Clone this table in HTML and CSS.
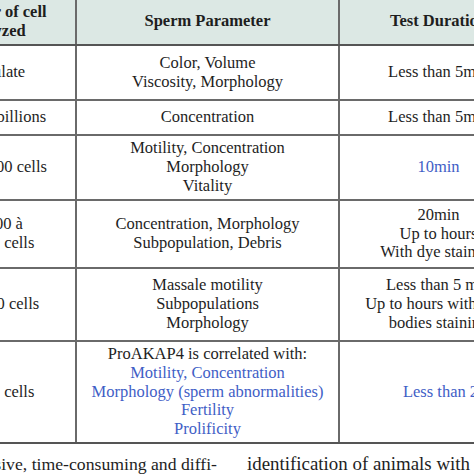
FILE: index.html
```html
<!DOCTYPE html>
<html>
<head>
<meta charset="utf-8">
<link rel="stylesheet" href="styles.css">
</head>
<body>
<div class="table">
  <div class="row head">
    <div class="cell"><span>Number of cell</span><span>analyzed</span></div>
    <div class="cell"><span>Sperm Parameter</span></div>
    <div class="cell"><span>Test Duration</span></div>
  </div>
  <div class="row r1">
    <div class="cell"><span>Ejaculate</span></div>
    <div class="cell"><span>Color, Volume</span><span>Viscosity, Morphology</span></div>
    <div class="cell"><span>Less than 5min</span></div>
  </div>
  <div class="row r2">
    <div class="cell"><span>Several billions</span></div>
    <div class="cell"><span>Concentration</span></div>
    <div class="cell"><span>Less than 5min</span></div>
  </div>
  <div class="row r3">
    <div class="cell"><span>100 to 200 cells</span></div>
    <div class="cell"><span>Motility, Concentration</span><span>Morphology</span><span>Vitality</span></div>
    <div class="cell"><span class="blue">10min</span></div>
  </div>
  <div class="row r4">
    <div class="cell"><span>10 000 à</span><span>50 000 cells</span></div>
    <div class="cell"><span>Concentration, Morphology</span><span>Subpopulation, Debris</span></div>
    <div class="cell"><span>20min</span><span>Up to hours</span><span>With dye staining</span></div>
  </div>
  <div class="row r5">
    <div class="cell"><span>100-200 cells</span></div>
    <div class="cell"><span>Massale motility</span><span>Subpopulations</span><span>Morphology</span></div>
    <div class="cell"><span>Less than 5 min</span><span>Up to hours with dead</span><span>bodies staining</span></div>
  </div>
  <div class="row r6">
    <div class="cell"><span>10 000 cells</span></div>
    <div class="cell"><span>ProAKAP4 is correlated with:</span><span class="blue">Motility, Concentration</span><span class="blue">Morphology (sperm abnormalities)</span><span class="blue">Fertility</span><span class="blue">Prolificity</span></div>
    <div class="cell shifted"><span class="blue">Less than 20min</span></div>
  </div>
</div>
<div class="text">
  <p class="col left">expensive, time-consuming and diffi-</p>
  <p class="col right">identification of animals with the</p>
</div>
</body>
</html>
```
FILE: styles.css
```css
html, body {
  margin: 0;
  padding: 0;
  background: #ffffff;
  overflow: hidden;
}
body {
  width: 474px;
  height: 474px;
  font-family: "Liberation Serif", "Times New Roman", serif;
  color: #1e1e1e;
}
.table {
  margin: -3px 0 0 -86px;
  width: 623px;
  font-size: 16.5px;
  line-height: 18.7px;
}
.row {
  display: grid;
  grid-template-columns: 163px 263px 197px;
  border-bottom: 2px solid #6a6a6a;
}
.cell {
  display: flex;
  flex-direction: column;
  justify-content: center;
  align-items: center;
  text-align: center;
  white-space: nowrap;
  border-right: 2px solid #6a6a6a;
}
.cell:last-child {
  border-right: none;
}
.cell.shifted {
  padding-left: 38px;
}
.head {
  background: #dce8e4;
  font-weight: bold;
  height: 47px;
  border-bottom-color: #555;
  line-height: 19px;
}
.r1 { height: 53px; }
.r2 { height: 33px; }
.r3 { height: 63px; }
.r4 { height: 66px; }
.r5 { height: 71px; }
.r6 { height: 100px; border-bottom-color: #555; }
.blue {
  color: #3f5ec6;
}
.text {
  display: flex;
  align-items: baseline;
  margin-top: 9px;
  line-height: 22px;
}
.col {
  margin: 0;
  flex-shrink: 0;
  white-space: nowrap;
}
.left {
  margin-left: -103px;
  width: 320px;
  text-align: right;
  font-size: 17.7px;
}
.right {
  margin-left: 30px;
  font-size: 18.9px;
}
```
